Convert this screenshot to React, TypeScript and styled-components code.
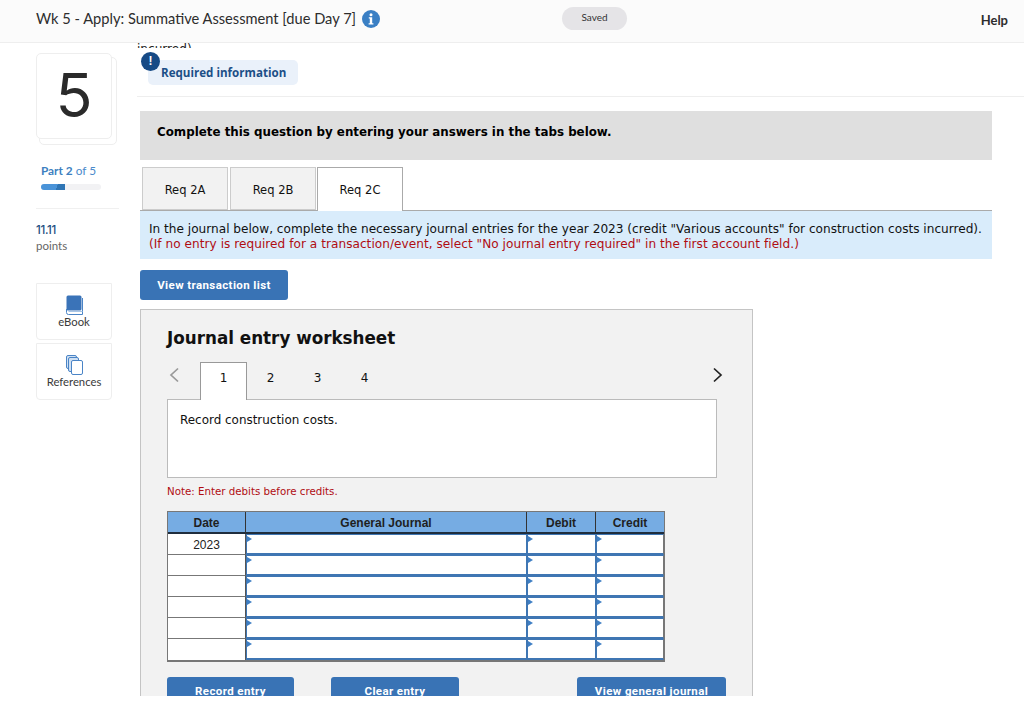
import React from "react";
import styled, { createGlobalStyle } from "styled-components";

const Global = createGlobalStyle`
  html, body { margin: 0; padding: 0; background: #fff; }
  body { font-family: "Open Sans", "Liberation Sans", sans-serif; }
  * { box-sizing: border-box; }
`;

const Page = styled.div`
  width: 1024px;
  height: 714px;
  display: flex;
  flex-direction: column;
  overflow: hidden;
  background: #fff;
`;
const Header = styled.header`
  height: 43px;
  flex: none;
  display: grid;
  grid-template-columns: 526px 65px 1fr;
  align-items: center;
  padding-left: 36px;
  padding-right: 16px;
  background: #fbfbfb;
  border-bottom: 1px solid #eeeeee;
`;
const TitleRow = styled.div`
  display: flex;
  align-items: center;
  gap: 6px;
  margin-bottom: 5px;
`;
const Title = styled.h1`
  margin: 0;
  font: 400 14.65px/18px Lato, sans-serif;
  color: #2d2d2d;
`;
const SavedPill = styled.div`
  height: 23px;
  margin-top: -6px;
  border-radius: 12px;
  background: #e5e4e7;
  font: 400 10px/21px Lato, sans-serif;
  color: #333;
  text-align: center;
`;
const Help = styled.div`
  justify-self: end;
  font: 700 13px/18px Lato, sans-serif;
  color: #2d2d2d;
  margin-bottom: 2px;
`;
const Body = styled.div`
  height: 653px;
  flex: none;
  display: flex;
  overflow: hidden;
`;
const Sidebar = styled.aside`
  width: 137px;
  flex: none;
  padding: 10px 18px 0 36px;
`;
const CardStack = styled.div`
  position: relative;
  width: 76px;
  height: 86px;
  &::before {
    content: "";
    position: absolute;
    left: 3px;
    top: 4px;
    width: 76px;
    height: 86px;
    border: 1px solid #eee;
    border-radius: 5px;
    background: #fff;
  }
`;
const NumberCard = styled.div`
  position: relative;
  height: 100%;
  border: 1px solid #eeeeee;
  border-radius: 5px;
  background: #fff;
  font: 400 61px/82px Inter, sans-serif;
  color: #2a2a2a;
  text-align: center;
`;
const PartText = styled.div`
  margin: 25px 0 0 5px;
  font: 400 11.8px/14px Lato, sans-serif;
  color: #4a8acb;
  b { font-weight: 700; color: #3d7fc0; }
`;
const Progress = styled.div`
  margin: 6px 0 0 5px;
  width: 60px;
  height: 6px;
  border-radius: 3px;
  background: #f2f2f4;
  overflow: hidden;
`;
const ProgressFill = styled.div`
  height: 100%;
  background: linear-gradient(105deg, #4a93d8 0 65%, #2f75b5 65%);
`;
const SideRule = styled.hr`
  margin: 18px 0 0;
  width: 83px;
  height: 1px;
  border: 0;
  background: #f0f0f0;
`;
const Score = styled.div`
  margin-top: 13px;
  font: 500 11.5px/16px Inter, sans-serif;
  letter-spacing: -0.3px;
  color: #1f4f82;
`;
const ScoreLabel = styled.div`
  font: 400 11.5px/16px Lato, sans-serif;
  color: #666;
`;
const Tools = styled.div`
  margin-top: 29px;
  display: flex;
  flex-direction: column;
  gap: 3px;
  width: 76px;
`;
const ToolCard = styled.div`
  height: 57px;
  border: 1px solid #eeeeee;
  border-radius: 0 0 4px 4px;
  padding-top: 11px;
  display: flex;
  flex-direction: column;
  align-items: center;
  font: 400 11.3px/13px Lato, sans-serif;
  color: #3a3a3a;
`;
const Main = styled.main`
  width: 887px;
  height: 653px;
  overflow: hidden;
  position: relative;
`;
const ScrolledOff = styled.div`
  height: 5px;
  overflow: hidden;
  font: 400 12.1px/12px "DejaVu Sans", sans-serif;
  color: #222;
  & > span { position: relative; top: 0; display: block; }
`;
const RequiredBar = styled.div`
  height: 49px;
  padding: 12px 0 0 11px;
  border-bottom: 1px solid #eeeeee;
`;
const RequiredTag = styled.div`
  position: relative;
  display: inline-block;
  height: 25px;
  width: 150px;
  padding-left: 13px;
  border-radius: 5px;
  background: #eaf1fa;
  font: 700 11.6px/25px "Open Sans", sans-serif;
  color: #1c4f87;
`;
const Bang = styled.span`
  position: absolute;
  left: -7px;
  top: -8px;
  width: 19px;
  height: 19px;
  border-radius: 50%;
  background: #164a85;
  color: #fff;
  font: 700 12px/19px "Liberation Sans", sans-serif;
  text-align: center;
`;
const Content = styled.div`
  padding: 14px 32px 0 3px;
  font-family: "DejaVu Sans", Verdana, sans-serif;
`;
const Instruction = styled.div`
  height: 49px;
  padding-left: 17px;
  background: #dfdfdf;
  font: 700 11.87px/42px "DejaVu Sans", sans-serif;
  color: #000;
`;
const ReqTabs = styled.div`
  margin-top: 7px;
  height: 44px;
  display: flex;
  padding-left: 2px;
  border-bottom: 1px solid #aaa;
`;
const ReqTab = styled.div<{ $active?: boolean }>`
  width: 86px;
  height: ${(p) => (p.$active ? 44 : 43)}px;
  margin-left: ${(p) => (p.$active ? -1 : 0)}px;
  margin-right: ${(p) => (p.$active ? 0 : 2)}px;
  border: 1px solid ${(p) => (p.$active ? "#aaa" : "#ccc")};
  border-bottom: ${(p) => (p.$active ? "0" : "1px solid #ccc")};
  background: ${(p) => (p.$active ? "#fff" : "#f2f2f2")};
  font: 400 11.5px/45px "DejaVu Sans", sans-serif;
  color: #111;
  text-align: center;
`;
const InfoBox = styled.div`
  height: 48px;
  padding: 11px 0 0 9px;
  background: #d9ecfb;
  font: 400 12.12px/15px "DejaVu Sans", sans-serif;
  color: #111;
  white-space: nowrap;
`;
const Red = styled.div`
  color: #b00d12;
  letter-spacing: 0.035px;
`;
const ActionButton = styled.button<{ $w: number }>`
  width: ${(p) => p.$w}px;
  height: 30px;
  border: 0;
  border-radius: 3px;
  background: #3973b5;
  color: #fff;
  font: 700 11.5px/30px Roboto, sans-serif;
  letter-spacing: 0.4px;
  padding: 0 0 1px;
`;
const ViewList = styled.div`
  margin-top: 11px;
`;
const Worksheet = styled.section`
  margin-top: 9px;
  width: 613px;
  height: 400px;
  padding: 0 26px;
  background: #f2f2f2;
  border: 1px solid #c4c4c4;
`;
const SheetTitle = styled.h2`
  margin: 17px 0 0;
  font: 700 16.77px/22px "DejaVu Sans", sans-serif;
  color: #111;
`;
const StepRow = styled.div`
  margin-top: 13px;
  height: 38px;
  display: flex;
  align-items: stretch;
  position: relative;
  z-index: 1;
`;
const Chevron = styled.div`
  width: 33px;
  padding: 5px 0 0 2px;
`;
const Step = styled.div<{ $active?: boolean }>`
  width: 47px;
  height: 38px;
  border: ${(p) => (p.$active ? "1px solid #999" : "1px solid transparent")};
  border-bottom: 0;
  background: ${(p) => (p.$active ? "#fff" : "transparent")};
  font: 400 12px/30px "DejaVu Sans", sans-serif;
  color: #111;
  text-align: center;
`;
const NextChevron = styled.div`
  margin-left: auto;
  padding: 5px 0 0;
  width: 17px;
  margin-right: -3px;
`;
const TaskBox = styled.div`
  margin-top: -1px;
  width: 550px;
  height: 79px;
  padding: 12px 12px;
  background: #fff;
  border: 1px solid #bbb;
  font: 400 11.95px/16px "DejaVu Sans", sans-serif;
  color: #111;
`;
const Note = styled.div`
  margin-top: 6px;
  height: 14px;
  font: 400 10.26px/14px "DejaVu Sans", sans-serif;
  color: #b00d12;
`;
const Journal = styled.table`
  margin-top: 13px;
  width: 498px;
  height: 150px;
  border-collapse: separate;
  border-spacing: 0;
  table-layout: fixed;
  background: #fff;
  border: 1px solid #777;
  border-width: 1px 1px 2px 1px;
  font-family: "Liberation Sans", sans-serif;
`;
const Head = styled.th<{ $w?: number }>`
  width: ${(p) => (p.$w ? `${p.$w}px` : "auto")};
  height: 22px;
  padding: 3px 0 0;
  background: #76ace3;
  border-right: 1px solid #333;
  border-bottom: 2px solid #1f2d3d;
  font: 700 12px/17px "Liberation Sans", sans-serif;
  color: #1f1f1f;
  &:last-child { border-right: 0; }
`;
const DateCell = styled.td`
  height: 21px;
  padding: 3px 0 0;
  background: #fff;
  border-right: 1px solid #555;
  border-bottom: 1px solid #777;
  font: 400 12px/17px "Liberation Sans", sans-serif;
  color: #222;
  text-align: center;
  tr:last-child & { border-bottom: 0; }
`;
const EntryCell = styled.td`
  position: relative;
  height: 21px;
  padding: 0;
  background: #fff;
  border: 1px solid #3f76b3;
  border-width: 1px 1px 2px 1px;
  &:last-child { border-right-color: #777; }
  &::before {
    content: "";
    position: absolute;
    left: 0;
    top: 1px;
    border-left: 5px solid #3f7fc4;
    border-top: 3px solid transparent;
    border-bottom: 3px solid transparent;
  }
`;
const ButtonRow = styled.div`
  margin-top: 15px;
  display: flex;
  width: 559px;
`;
const Spacer = styled.div<{ $w: number }>`
  width: ${(p) => p.$w}px;
  flex: none;
`;
const SheetButton = styled(ActionButton)`
  flex: none;
  line-height: 28px;
  padding: 0 0 2px;
`;

const InfoIcon = () => (
  <svg width="18" height="18" viewBox="0 0 18 18">
    <circle cx="9" cy="9" r="9" fill="#3a7fc4" />
    <circle cx="9" cy="4.8" r="1.5" fill="#fff" />
    <path d="M6.8 7.3h3.4v6h1.2v1.3H6.6v-1.3h1.2V8.6h-1z" fill="#fff" />
  </svg>
);
const BookIcon = () => (
  <svg width="17" height="20" viewBox="0 0 17 20">
    <rect x="0.5" y="0.5" width="15" height="15" rx="1.5" fill="#3a73b8" />
    <path d="M0.5 14v3.5a2 2 0 0 0 2 2h14V3" fill="none" stroke="#4a84c6" />
    <path d="M2.5 16.5h14" stroke="#a8c6e6" />
  </svg>
);
const PagesIcon = () => (
  <svg width="17" height="20" viewBox="0 0 17 20">
    <rect x="0.5" y="0.5" width="10" height="13" rx="1.5" fill="#cfe0f3" stroke="#4a84c6" />
    <rect x="2.5" y="2.5" width="10" height="14" rx="1.5" fill="#cfe0f3" stroke="#4a84c6" />
    <rect x="5.5" y="5.5" width="11" height="14" rx="1.5" fill="#fff" stroke="#4a84c6" />
  </svg>
);
const PrevIcon = () => (
  <svg width="11" height="16" viewBox="0 0 11 16">
    <path d="M9 1.5 2 8l7 6.5" fill="none" stroke="#999" strokeWidth="1.7" />
  </svg>
);
const NextIcon = () => (
  <svg width="11" height="16" viewBox="0 0 11 16">
    <path d="M2 1.5 9 8l-7 6.5" fill="none" stroke="#222" strokeWidth="1.7" />
  </svg>
);

const rows = ["2023", "", "", "", "", ""];

export default function App() {
  return (
    <Page>
      <Global />
      <Header>
        <TitleRow>
          <Title>Wk 5 - Apply: Summative Assessment [due Day 7]</Title>
          <InfoIcon />
        </TitleRow>
        <SavedPill>Saved</SavedPill>
        <Help>Help</Help>
      </Header>
      <Body>
        <Sidebar>
          <CardStack>
            <NumberCard>5</NumberCard>
          </CardStack>
          <PartText>
            <b>Part 2</b> of 5
          </PartText>
          <Progress>
            <ProgressFill style={{ width: `${(2 / 5) * 100}%` }} />
          </Progress>
          <SideRule />
          <Score>11.11</Score>
          <ScoreLabel>points</ScoreLabel>
          <Tools>
            <ToolCard>
              <BookIcon />
              eBook
            </ToolCard>
            <ToolCard>
              <PagesIcon />
              References
            </ToolCard>
          </Tools>
        </Sidebar>
        <Main>
          <ScrolledOff>
            <span>incurred)</span>
          </ScrolledOff>
          <RequiredBar>
            <RequiredTag>
              <Bang>!</Bang>
              Required information
            </RequiredTag>
          </RequiredBar>
          <Content>
            <Instruction>Complete this question by entering your answers in the tabs below.</Instruction>
            <ReqTabs>
              <ReqTab>Req 2A</ReqTab>
              <ReqTab>Req 2B</ReqTab>
              <ReqTab $active>Req 2C</ReqTab>
            </ReqTabs>
            <InfoBox>
              In the journal below, complete the necessary journal entries for the year 2023 (credit "Various accounts" for construction costs incurred).
              <Red>(If no entry is required for a transaction/event, select "No journal entry required" in the first account field.)</Red>
            </InfoBox>
            <ViewList>
              <ActionButton $w={148}>View transaction list</ActionButton>
            </ViewList>
            <Worksheet>
              <SheetTitle>Journal entry worksheet</SheetTitle>
              <StepRow>
                <Chevron>
                  <PrevIcon />
                </Chevron>
                <Step $active>1</Step>
                <Step>2</Step>
                <Step>3</Step>
                <Step>4</Step>
                <NextChevron>
                  <NextIcon />
                </NextChevron>
              </StepRow>
              <TaskBox>Record construction costs.</TaskBox>
              <Note>Note: Enter debits before credits.</Note>
              <Journal>
                <thead>
                  <tr>
                    <Head $w={78}>Date</Head>
                    <Head>General Journal</Head>
                    <Head $w={69}>Debit</Head>
                    <Head $w={68}>Credit</Head>
                  </tr>
                </thead>
                <tbody>
                  {rows.map((r, i) => (
                    <tr key={i}>
                      <DateCell>{r}</DateCell>
                      <EntryCell />
                      <EntryCell />
                      <EntryCell />
                    </tr>
                  ))}
                </tbody>
              </Journal>
              <ButtonRow>
                <SheetButton $w={127}>Record entry</SheetButton>
                <Spacer $w={37} />
                <SheetButton $w={128}>Clear entry</SheetButton>
                <Spacer $w={118} />
                <SheetButton $w={149}>View general journal</SheetButton>
              </ButtonRow>
            </Worksheet>
          </Content>
        </Main>
      </Body>
    </Page>
  );
}
